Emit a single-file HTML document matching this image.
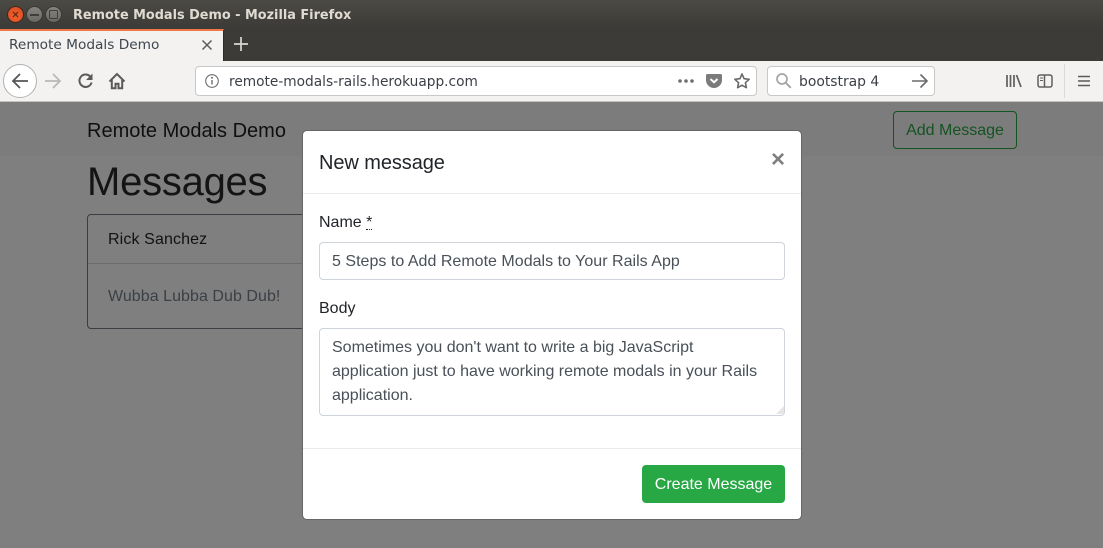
<!DOCTYPE html>
<html><head><meta charset="utf-8"><title>Remote Modals Demo</title>
<style>
*{box-sizing:border-box}
html,body{margin:0;padding:0;width:1103px;height:548px;overflow:hidden;background:#7f7f7f;font-family:"Liberation Sans",sans-serif}
.a{position:absolute;white-space:nowrap}
.u{font-family:"DejaVu Sans",sans-serif}
.t{font-size:16px;line-height:24px}
</style></head><body>
<!-- title bar -->
<div class="a" style="left:0;top:0;width:1103px;height:61px;background:linear-gradient(#4c4a44,#3c3b37 45%,#3c3b37)"></div>
<div class="a" style="left:7px;top:6px;width:17px;height:17px;border-radius:50%;background:radial-gradient(circle at 50% 60%,#f0632f,#d9481f);border:1px solid #3a2a20"></div>
<svg class="a" style="left:7px;top:6px" width="17" height="17"><path d="M6 6l5 5M11 6l-5 5" stroke="#6b2a14" stroke-width="1.300"/></svg>
<div class="a" style="left:26px;top:6px;width:17px;height:17px;border-radius:50%;background:linear-gradient(#85847e,#6a6964);border:1px solid #3a3935"></div>
<div class="a" style="left:30px;top:14px;width:9px;height:2px;background:#3f3e3a"></div>
<div class="a" style="left:45px;top:6px;width:17px;height:17px;border-radius:50%;background:linear-gradient(#85847e,#6a6964);border:1px solid #3a3935"></div>
<div class="a" style="left:49px;top:10px;width:9px;height:9px;border:1.500px solid #3f3e3a;border-radius:1px"></div>
<div class="a u" style="left:73px;top:7px;font-size:12.85px;font-weight:700;line-height:18px;color:#dfdbd2">Remote Modals Demo - Mozilla Firefox</div>
<!-- tab -->
<div class="a" style="left:0;top:29px;width:224px;height:32px;background:#f3f2f0;border-top:2px solid #f07746;border-right:1px solid #2a2a28"></div>
<div class="a u" style="left:9px;top:35px;font-size:13.7px;line-height:20px;color:#3e4650">Remote Modals Demo</div>
<svg class="a" style="left:200px;top:38px" width="14" height="14"><path d="M2.500 2.500l9 9M11.500 2.500l-9 9" stroke="#5c5c5c" stroke-width="1.500"/></svg>
<svg class="a" style="left:233px;top:36px" width="16" height="16"><path d="M8 1v14M1 8h14" stroke="#d8d7d3" stroke-width="1.700"/></svg>
<!-- toolbar -->
<div class="a" style="left:0;top:61px;width:1103px;height:41px;background:#f3f2f0;border-bottom:1px solid #c4c3c1"></div>
<div class="a" style="left:3px;top:64px;width:34px;height:34px;border-radius:50%;background:#fff;border:1px solid #b3b2b1"></div>
<svg class="a" style="left:11px;top:72px" width="18" height="18"><path d="M2 9h15M9 2L2 9l7 7" fill="none" stroke="#555" stroke-width="1.800"/></svg>
<svg class="a" style="left:44px;top:72px" width="18" height="18"><path d="M1 9h15M9 2l7 7-7 7" fill="none" stroke="#b9b8b6" stroke-width="1.700"/></svg>
<svg class="a" style="left:77px;top:72px" width="18" height="18"><path d="M14.600 10.500A6.200 6.200 0 1 1 13 4.300" fill="none" stroke="#5a5a5a" stroke-width="2"/><path d="M15.500 1.500v6.500H9z" fill="#5a5a5a"/></svg>
<svg class="a" style="left:108px;top:72px" width="18" height="18"><path d="M1.500 9.500L9 2l7.500 7.500M3.800 8v8.200h3.700v-4.400h3v4.400h3.700V8" fill="none" stroke="#5a5a5a" stroke-width="2"/></svg>
<div class="a" style="left:195px;top:66px;width:562px;height:30px;background:#fff;border:1px solid #c9c8c6;border-radius:4px"></div>
<svg class="a" style="left:204px;top:73px" width="16" height="16"><circle cx="8" cy="8" r="6.300" fill="none" stroke="#6d6d6d" stroke-width="1.100"/><path d="M8 7v4.500" stroke="#6d6d6d" stroke-width="1.400"/><circle cx="8" cy="4.800" r="1" fill="#6d6d6d"/></svg>
<div class="a u" style="left:229px;top:72px;font-size:13.73px;line-height:20px;color:#3b3f46">remote-modals-rails.herokuapp.com</div>
<svg class="a" style="left:677px;top:77px" width="18" height="8"><g fill="#6e6e6e"><circle cx="3" cy="4" r="1.800"/><circle cx="9" cy="4" r="1.800"/><circle cx="15" cy="4" r="1.800"/></g></svg>
<svg class="a" style="left:705px;top:73px" width="18" height="16"><path d="M2.500 1h13A1.500 1.500 0 0 1 17 2.500V7a8 8 0 0 1-16 0V2.500A1.500 1.500 0 0 1 2.500 1z" fill="#7b7b7b"/><path d="M5.500 6L9 9.300 12.500 6" fill="none" stroke="#fff" stroke-width="2"/></svg>
<svg class="a" style="left:733px;top:72px" width="18" height="18"><path d="M9 2l2.100 4.700 5.100.6-3.800 3.400 1 5L9 13.200 4.600 15.700l1-5L1.800 7.300l5.100-.6z" fill="none" stroke="#6a6a6a" stroke-width="1.600" stroke-linejoin="round"/></svg>
<div class="a" style="left:767px;top:66px;width:168px;height:30px;background:#fff;border:1px solid #c9c8c6;border-radius:4px"></div>
<svg class="a" style="left:775px;top:72px" width="18" height="18"><circle cx="7" cy="7" r="5" fill="none" stroke="#a5a5a5" stroke-width="1.700"/><path d="M10.800 10.800l5 5" stroke="#a5a5a5" stroke-width="2"/></svg>
<div class="a u" style="left:799px;top:72px;font-size:13.9px;line-height:20px;color:#3b3f46">bootstrap 4</div>
<svg class="a" style="left:911px;top:72px" width="18" height="18"><path d="M1 9h15M9.500 2.500L16 9l-6.500 6.500" fill="none" stroke="#6a6a6a" stroke-width="1.600"/></svg>
<svg class="a" style="left:1005px;top:73px" width="18" height="16"><path d="M2 2v12M5.500 2v12M9 2v12M11.500 2l4.500 12" stroke="#5f5f5f" stroke-width="1.700" fill="none"/></svg>
<svg class="a" style="left:1037px;top:73px" width="16" height="16"><rect x="1" y="2" width="14" height="12" rx="2" fill="none" stroke="#5f5f5f" stroke-width="1.500"/><path d="M7.500 2v12" stroke="#5f5f5f" stroke-width="1.500"/><path d="M3 5h3M3 7.500h3" stroke="#5f5f5f"/></svg>
<div class="a" style="left:1064px;top:64px;width:1px;height:34px;background:#dcdbd9"></div>
<svg class="a" style="left:1077px;top:74px" width="14" height="14"><path d="M1 2.500h12M1 7h12M1 11.500h12" stroke="#5a5a5a" stroke-width="1.600"/></svg>
<!-- page -->
<div class="a" style="left:0;top:102px;width:1103px;height:54px;background:#7c7c7c"></div>
<div class="a" style="left:87px;top:116px;font-size:20px;line-height:30px;color:#0f0f0f">Remote Modals Demo</div>
<div class="a t" style="left:893px;top:111px;width:124px;height:38px;border:1px solid #145322;border-radius:4px;color:#145322;text-align:center;line-height:38px">Add Message</div>
<div class="a" style="left:87px;top:158px;font-size:40px;line-height:48px;letter-spacing:-.25px;color:#141414">Messages</div>
<div class="a" style="left:87px;top:214px;width:260px;height:115px;border:1px solid #3a3e42;border-radius:4px"></div>
<div class="a" style="left:88px;top:263px;width:240px;height:1px;background:#6c6c6c"></div>
<div class="a t" style="left:108px;top:228px;letter-spacing:.12px;color:#111">Rick Sanchez</div>
<div class="a t" style="left:108px;top:285px;letter-spacing:.05px;color:#3b4045">Wubba Lubba Dub Dub!</div>
<!-- modal -->
<div class="a" style="left:302px;top:130px;width:500px;height:390px;background:#fff;border:1px solid #666;border-radius:5px"></div>
<div class="a" style="left:319px;top:148px;font-size:20px;line-height:30px;letter-spacing:-.08px;color:#212529">New message</div>
<div class="a" style="left:771px;top:146px;font-size:24px;font-weight:700;line-height:28px;color:#7f7f7f">×</div>
<div class="a" style="left:303px;top:193px;width:498px;height:1px;background:#e9ecef"></div>
<div class="a t" style="left:319px;top:211px;color:#212529">Name *</div>
<div class="a" style="left:366px;top:229px;width:6px;height:0;border-top:1px dotted #212529"></div>
<div class="a" style="left:319px;top:242px;width:466px;height:38px;border:1px solid #ced4da;border-radius:4px;background:#fff"></div>
<div class="a t" style="left:332px;top:250px;letter-spacing:.02px;color:#495057">5 Steps to Add Remote Modals to Your Rails App</div>
<div class="a t" style="left:319px;top:297px;color:#212529">Body</div>
<div class="a" style="left:319px;top:328px;width:466px;height:88px;border:1px solid #ced4da;border-radius:4px;background:#fff"></div>
<div class="a t" style="left:332px;top:336px;color:#495057">Sometimes you don't want to write a big JavaScript<br>application just to have working remote modals in your Rails<br>application.</div>
<svg class="a" style="left:775px;top:405px" width="10" height="10"><path d="M9 1v8H1z" fill="#e6e6e6"/></svg>
<div class="a" style="left:303px;top:448px;width:498px;height:1px;background:#e9ecef"></div>
<div class="a t" style="left:642px;top:465px;width:143px;height:38px;background:#28a745;border-radius:4px;color:#fff;text-align:center;line-height:40px">Create Message</div>
</body></html>
